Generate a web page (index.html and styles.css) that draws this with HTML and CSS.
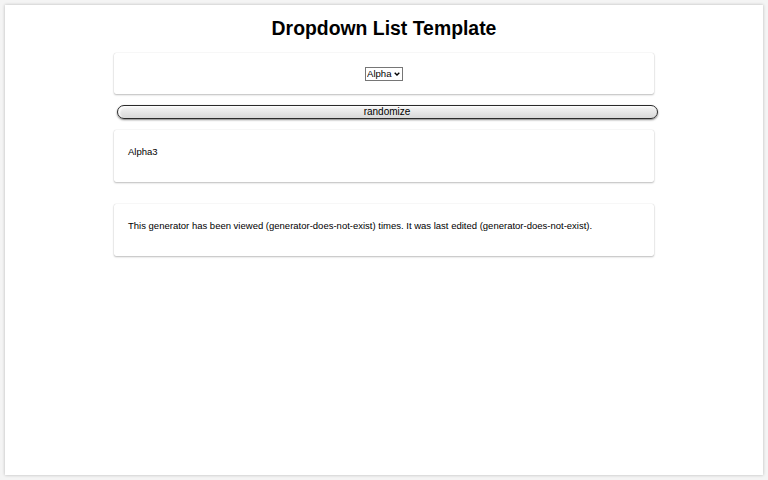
FILE: index.html
```html
<!DOCTYPE html>
<html lang="en">
<head>
    <meta charset="UTF-8">
    <meta name="viewport" content="width=device-width, initial-scale=1.0">
    <title>Dropdown List Template</title>
    <link rel="stylesheet" href="styles.css">
</head>
<body>

<div class="page">
    <h1 class="title">Dropdown List Template</h1>

    <div class="card card-center">
        <select class="picker">
            <option>Alpha</option>
            <option>Beta</option>
            <option>Gamma</option>
        </select>
    </div>

    <button class="randomize">randomize</button>

    <div class="card card-text">Alpha3</div>

    <div class="card card-text card-info">This generator has been viewed (generator-does-not-exist) times. It was last edited (generator-does-not-exist).</div>
</div>

</body>
</html>
```

FILE: styles.css
```css
body {
    margin: 0;
    padding: 5px;
    background-color: #f4f4f4;
    font-family: "Liberation Sans", Arial, sans-serif;
    color: #000;
}

.page {
    background-color: #fff;
    box-shadow: 0 0 3px rgba(0, 0, 0, 0.25);
    min-height: 470px;
    box-sizing: border-box;
    padding-top: 11px;
    display: flex;
    flex-direction: column;
    align-items: center;
}

.title {
    margin: 0;
    font-size: 19.4px;
    line-height: 24px;
}

.card {
    width: 540px;
    box-sizing: border-box;
    background-color: #fff;
    box-shadow: 0 1px 2px rgba(0, 0, 0, 0.25), 0 0 1px rgba(0, 0, 0, 0.2);
    border-radius: 2px;
}

.card-center {
    margin-top: 13px;
    height: 41px;
    display: flex;
    justify-content: center;
    align-items: center;
}

/* plain select with a small chevron drawn as svg */
.picker {
    appearance: none;
    -webkit-appearance: none;
    font-family: "Liberation Sans", Arial, sans-serif;
    font-size: 9.6px;
    height: 14px;
    width: 38px;
    padding: 0 0 0 1px;
    border: 1px solid #767676;
    border-radius: 0;
    color: #000;
    background: #fff url("data:image/svg+xml;utf8,<svg xmlns='http://www.w3.org/2000/svg' width='6' height='4' viewBox='0 0 6 4'><path d='M0.7 0.7 L3 3 L5.3 0.7' fill='none' stroke='black' stroke-width='1.4'/></svg>") no-repeat right 2px center;
}

/* pill button with a soft grey gradient */
.randomize {
    margin-top: 11px;
    margin-left: 6px;
    width: 541px;
    height: 14px;
    padding: 0;
    font-family: "Liberation Sans", Arial, sans-serif;
    font-size: 10px;
    line-height: 12px;
    color: #000;
    border: 1px solid #2a2a2a;
    border-radius: 8px;
    background: linear-gradient(to bottom, #f6f6f6, #d8d8d8);
    box-shadow: inset 2px 1px 2px rgba(255, 255, 255, 0.9), 0 1px 2px rgba(0, 0, 0, 0.5);
}

.card-text {
    margin-top: 11px;
    height: 52px;
    padding: 16px 14px 0;
    line-height: 12px;
    font-size: 9.5px;
}

.card-info {
    margin-top: 22px;
}
```
